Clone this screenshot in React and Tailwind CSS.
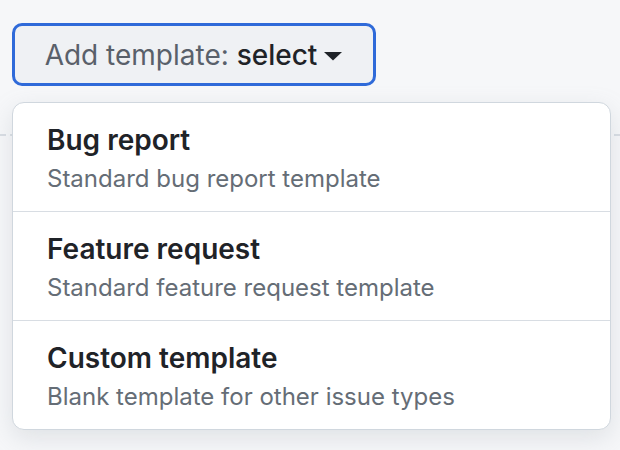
import React from "react";

const items = [
  { title: "Bug report", desc: "Standard bug report template" },
  { title: "Feature request", desc: "Standard feature request template" },
  { title: "Custom template", desc: "Blank template for other issue types" },
];

export default function App() {
  return (
    <div
      className="relative w-[620px] h-[450px] overflow-hidden bg-[#f6f7f9]"
      style={{ fontFamily: "Inter, 'Noto Sans', sans-serif" }}
    >
      <div className="absolute left-0 right-0 top-[134px] border-t-2 border-dashed border-[#d8dde3]" />
      <div className="relative pt-[23px] pl-[12px]">
        <button className="flex items-center justify-center w-[364px] h-[63px] rounded-[10px] border-[3px] border-[#2f6ad9] bg-[#eff1f4] text-[28px] leading-none">
          <span className="text-[#59606a]">Add template:&nbsp;</span>
          <span className="text-[#1f2328] font-medium">select</span>
          <svg className="ml-[6px] mt-[2px]" width="20" height="10" viewBox="0 0 20 10">
            <path d="M1 1 L19 1 L10 9.5 Z" fill="#1f2328" />
          </svg>
        </button>
      </div>
      <div className="relative mt-[16px] mx-[12px] w-[599px] rounded-[12px] border border-[#d0d7de] bg-white shadow-[0_8px_24px_rgba(140,149,159,0.22)] overflow-hidden">
        {items.map((it, i) => (
          <div
            key={it.title}
            className={`pl-[34px] pt-[20px] pb-[17px] ${i > 0 ? "border-t border-[#d8dde3]" : ""}`}
          >
            <div className="text-[28px] leading-[34px] font-semibold text-[#1f2328]">{it.title}</div>
            <div className="mt-[7px] text-[24px] leading-[30px] text-[#656d76]">{it.desc}</div>
          </div>
        ))}
      </div>
    </div>
  );
}
